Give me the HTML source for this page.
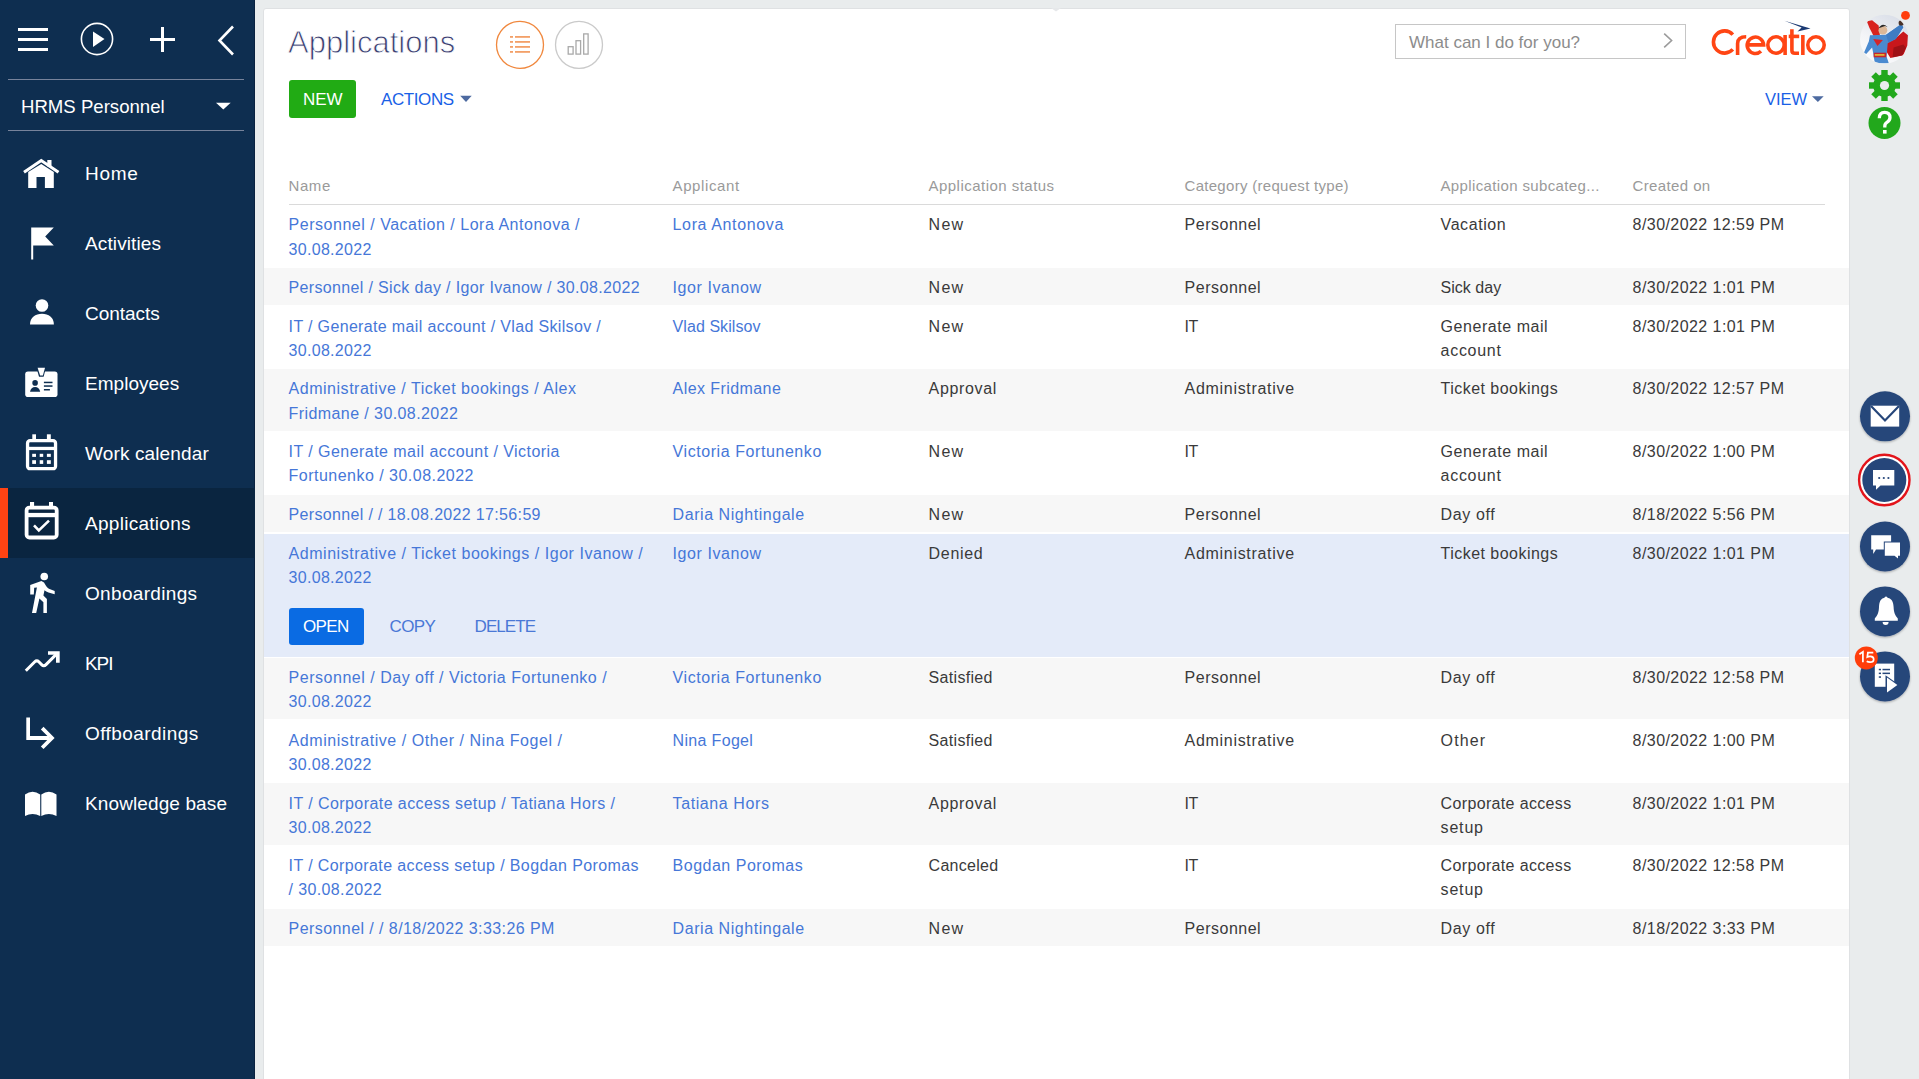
<!DOCTYPE html>
<html><head><meta charset="utf-8">
<style>
*{box-sizing:border-box;margin:0;padding:0}
html,body{width:1919px;height:1079px;overflow:hidden;background:#e9eced;font-family:"Liberation Sans",sans-serif;}
.abs{position:absolute}
#side{position:absolute;left:0;top:0;width:255px;height:1079px;background:#0e2e50;border-right:1px solid #0a2240}
#side .sep{position:absolute;left:8px;width:236px;height:1px;background:#77839b}
.mi{position:absolute;left:0;width:255px;height:70px;color:#fff;font-size:19px;letter-spacing:.15px}
.mi .t{position:absolute;left:85px;top:0.7px;line-height:70px;white-space:nowrap}
.mi svg{position:absolute;left:0;top:0}
#panel{position:absolute;left:263px;top:8px;width:1587px;height:1080px;background:#fff;border:1px solid #dfe1e3;border-radius:3px}
.tx{position:absolute;white-space:nowrap;line-height:1}
.row{position:absolute;left:264px;width:1585px}
.c{position:absolute;font-size:16px;line-height:24.4px;white-space:nowrap;color:#3a3a3a;letter-spacing:.37px}
.lk{color:#4677d8}
.hd{position:absolute;top:177px;font-size:15px;color:#9a9a9a;white-space:nowrap;letter-spacing:.42px}
.rb{position:absolute;left:1860px;width:50px;height:50px;border-radius:50%;background:#27467a;box-shadow:0 1px 2px rgba(0,0,0,.25)}
.rb svg{position:absolute;left:0;top:0}
</style></head>
<body>
<div id="side">
  <!-- top icons -->
  <svg class="abs" style="left:0;top:0" width="255" height="70">
    <rect x="18" y="28" width="30" height="3" fill="#fff"/>
    <rect x="18" y="38" width="30" height="3" fill="#fff"/>
    <rect x="18" y="48" width="30" height="3" fill="#fff"/>
    <circle cx="97" cy="39" r="15.6" fill="none" stroke="#fff" stroke-width="1.6"/>
    <path d="M93 31.5 L104.5 39 L93 47 Z" fill="#fff"/>
    <rect x="150" y="38" width="25" height="3" fill="#fff"/>
    <rect x="161" y="27" width="3" height="25" fill="#fff"/>
    <path d="M233 26.5 L219.5 40.5 L233 54.5" fill="none" stroke="#fff" stroke-width="2.6"/>
  </svg>
  <div class="sep" style="top:79px"></div>
  <div class="abs" style="left:21px;top:91.5px;font-size:18.6px;line-height:30px;color:#fff;white-space:nowrap">HRMS Personnel</div>
  <svg class="abs" style="left:0;top:90px" width="255" height="30"><path d="M216 12.7 L230.7 12.7 L223.3 19.5 Z" fill="#fff"/></svg>
  <div class="sep" style="top:130px"></div>

  <div class="abs" style="left:0;top:488px;width:255px;height:70px;background:#0a2540"></div>
  <div class="abs" style="left:0;top:488px;width:8px;height:70px;background:#ff4313"></div>
  <div class="mi" style="top:138px"><span class="t" style="letter-spacing:0.717px">Home</span></div>
  <div class="mi" style="top:208px"><span class="t" style="letter-spacing:0.117px">Activities</span></div>
  <div class="mi" style="top:278px"><span class="t" style="letter-spacing:-0.050px">Contacts</span></div>
  <div class="mi" style="top:348px"><span class="t" style="letter-spacing:0.025px">Employees</span></div>
  <div class="mi" style="top:418px"><span class="t" style="letter-spacing:0.133px">Work calendar</span></div>
  <div class="mi" style="top:488px"><span class="t" style="letter-spacing:0.277px">Applications</span></div>
  <div class="mi" style="top:558px"><span class="t" style="letter-spacing:0.330px">Onboardings</span></div>
  <div class="mi" style="top:628px"><span class="t" style="letter-spacing:-1.050px">KPI</span></div>
  <div class="mi" style="top:698px"><span class="t" style="letter-spacing:0.441px">Offboardings</span></div>
  <div class="mi" style="top:768px"><span class="t" style="letter-spacing:0.112px">Knowledge base</span></div>
  <svg class="abs" style="left:0;top:0" width="255" height="1079">
    <g fill="#fff">
    <!-- home -->
    <path d="M24 172.3 L41.25 160.5 L58.5 172.3" fill="none" stroke="#fff" stroke-width="3"/>
    <rect x="47.3" y="160" width="4.2" height="6.5"/>
    <path d="M28.2 188.1 V172 L41.25 164.1 L53.8 172 V188.1 H44.9 V177.1 H36.5 V188.1 Z"/>
    <!-- flag -->
    <path d="M31.2 227.6 H53.8 L45.2 236.6 L53.8 245.5 H33.2 V259.5 H31.2 Z"/>
    <!-- contact -->
    <circle cx="42" cy="305.5" r="6.3"/>
    <path d="M30 324.5 C30 317.5 35.5 313.85 42 313.85 C48.5 313.85 53.9 317.5 53.9 324.5 Z"/>
    <!-- employees badge -->
    <rect x="25.2" y="371.5" width="32.3" height="25.5" rx="2.8"/>
    <path d="M36.3 367 L46.2 367 L43.6 376.8 L39 376.8 Z" fill="#0e2e50"/>
    <path d="M37.6 367.7 L45 367.7 L42.9 375.5 L40.1 375.5 Z"/>
    <g fill="#0e2e50">
      <circle cx="35.1" cy="382.9" r="2.8"/>
      <path d="M30 391.8 C30.5 388.5 32.5 387 35.1 387 C37.7 387 39.7 388.5 40.2 391.8 Z"/>
      <rect x="43.9" y="381.7" width="8.6" height="1.5"/>
      <rect x="43.9" y="385.3" width="8.6" height="1.5"/>
      <rect x="43.9" y="389" width="6" height="1.5"/>
    </g>
    <!-- work calendar -->
    <rect x="27.55" y="440.7" width="28" height="28" rx="2.5" fill="none" stroke="#fff" stroke-width="3.3"/>
    <rect x="29" y="446.8" width="25" height="3.3"/>
    <rect x="32.3" y="434.3" width="3.7" height="5"/>
    <rect x="46.9" y="434.3" width="3.9" height="5"/>
    <rect x="32.2" y="453.8" width="3.8" height="3.1"/><rect x="39.7" y="453.8" width="3.5" height="3.1"/><rect x="46.9" y="453.8" width="3.9" height="3.1"/>
    <rect x="32.2" y="460.2" width="3.8" height="3.7"/><rect x="39.7" y="460.2" width="3.5" height="3.7"/><rect x="46.9" y="460.2" width="3.9" height="3.7"/>
    <!-- applications -->
    <rect x="26.6" y="507.6" width="30.1" height="29.9" rx="2.8" fill="none" stroke="#fff" stroke-width="3.8"/>
    <rect x="28" y="512.9" width="27" height="4.3"/>
    <rect x="30" y="502" width="4.1" height="5"/>
    <rect x="49" y="502" width="4" height="5"/>
    <path d="M34 525.4 L38.8 530.4 L49 520.6" fill="none" stroke="#fff" stroke-width="2.6"/>
    <!-- onboarding walker -->
    <circle cx="44.25" cy="576.45" r="3.8"/>
    <path d="M30.2 585.1 L41.4 581.1 L44 582.5 C46 585.5 47 588 48.9 588.7 L54.7 590.9 L54.7 594.3 L48.5 592.5 C46.8 591.8 45.6 591 44.5 590.2 L43.4 595.6 L46.9 598.9 L46.9 612.9 L43.4 612.9 L43.4 602.3 L39.4 598.5 L36.2 612.9 L32 612.9 L36.9 587.4 L34.2 587.8 L33.8 594.5 L30.2 594.5 Z"/>
    <!-- kpi -->
    <path d="M25.8 670.8 L34.8 661.8 Q36.8 659.8 38.8 661.8 L41.6 664.6 Q43.8 666.8 46 664.6 L57.2 653.4" fill="none" stroke="#fff" stroke-width="3"/>
    <path d="M48 651.2 H59.7 V662.7 H56 V654.8 H48 Z"/>
    <!-- offboardings -->
    <path d="M26.3 717.4 H30 V735.9 H49 V740 H26.3 Z"/>
    <path d="M42.2 728.1 L52 737.9 L42.2 747.8" fill="none" stroke="#fff" stroke-width="3.7"/>
    <!-- book -->
    <path d="M25 794.4 Q32.6 789.3 40.2 794.4 V816 Q32.6 811.8 25 816 Z"/>
    <path d="M41.3 794.4 Q48.9 789.3 56.5 794.4 V816 Q48.9 811.8 41.3 816 Z"/>
    </g>
  </svg>
</div>

<div id="panel"></div>
<div class="tx" id="title" style="left:288px;top:26.8px;font-size:31px;color:#3b3f72;-webkit-text-stroke:0.85px #fff">Applications</div>
<div class="abs" style="left:289px;top:204px;width:1536px;height:1px;background:#dadada"></div>
<div class="hd" style="left:288.5px;letter-spacing:0.595px">Name</div>
<div class="hd" style="left:672.5px;letter-spacing:0.623px">Applicant</div>
<div class="hd" style="left:928.5px;letter-spacing:0.472px">Application status</div>
<div class="hd" style="left:1184.5px;letter-spacing:0.296px">Category (request type)</div>
<div class="hd" style="left:1440.5px;letter-spacing:0.362px">Application subcateg...</div>
<div class="hd" style="left:1632.5px;letter-spacing:0.387px">Created on</div>
<div class="c lk" style="left:288.6px;top:213.1px"><span style="display:block;letter-spacing:0.516px">Personnel / Vacation / Lora Antonova /</span><span style="display:block;letter-spacing:0.294px">30.08.2022</span></div>
<div class="c lk" style="left:672.6px;top:213.1px"><span style="display:block;letter-spacing:0.624px">Lora Antonova</span></div>
<div class="c" style="left:928.6px;top:213.1px"><span style="display:block;letter-spacing:1.252px">New</span></div>
<div class="c" style="left:1184.6px;top:213.1px"><span style="display:block;letter-spacing:0.503px">Personnel</span></div>
<div class="c" style="left:1440.6px;top:213.1px"><span style="display:block;letter-spacing:0.569px">Vacation</span></div>
<div class="c" style="left:1632.6px;top:213.1px"><span style="display:block;letter-spacing:0.431px">8/30/2022 12:59 PM</span></div>
<div class="row" style="top:268px;height:37px;background:#f7f7f7"></div>
<div class="c lk" style="left:288.6px;top:275.8px"><span style="display:block;letter-spacing:0.344px">Personnel / Sick day / Igor Ivanow / 30.08.2022</span></div>
<div class="c lk" style="left:672.6px;top:275.8px"><span style="display:block;letter-spacing:0.571px">Igor Ivanow</span></div>
<div class="c" style="left:928.6px;top:275.8px"><span style="display:block;letter-spacing:1.252px">New</span></div>
<div class="c" style="left:1184.6px;top:275.8px"><span style="display:block;letter-spacing:0.503px">Personnel</span></div>
<div class="c" style="left:1440.6px;top:275.8px"><span style="display:block;letter-spacing:0.012px">Sick day</span></div>
<div class="c" style="left:1632.6px;top:275.8px"><span style="display:block;letter-spacing:0.435px">8/30/2022 1:01 PM</span></div>
<div class="c lk" style="left:288.6px;top:314.5px"><span style="display:block;letter-spacing:0.347px">IT / Generate mail account / Vlad Skilsov /</span><span style="display:block;letter-spacing:0.294px">30.08.2022</span></div>
<div class="c lk" style="left:672.6px;top:314.5px"><span style="display:block;letter-spacing:0.064px">Vlad Skilsov</span></div>
<div class="c" style="left:928.6px;top:314.5px"><span style="display:block;letter-spacing:1.252px">New</span></div>
<div class="c" style="left:1184.6px;top:314.5px"><span style="display:block;letter-spacing:-0.597px">IT</span></div>
<div class="c" style="left:1440.6px;top:314.5px"><span style="display:block;letter-spacing:0.546px">Generate mail</span><span style="display:block;letter-spacing:0.706px">account</span></div>
<div class="c" style="left:1632.6px;top:314.5px"><span style="display:block;letter-spacing:0.435px">8/30/2022 1:01 PM</span></div>
<div class="row" style="top:369px;height:62px;background:#f7f7f7"></div>
<div class="c lk" style="left:288.6px;top:377.4px"><span style="display:block;letter-spacing:0.519px">Administrative / Ticket bookings / Alex</span><span style="display:block;letter-spacing:0.415px">Fridmane / 30.08.2022</span></div>
<div class="c lk" style="left:672.6px;top:377.4px"><span style="display:block;letter-spacing:0.425px">Alex Fridmane</span></div>
<div class="c" style="left:928.6px;top:377.4px"><span style="display:block;letter-spacing:0.653px">Approval</span></div>
<div class="c" style="left:1184.6px;top:377.4px"><span style="display:block;letter-spacing:0.692px">Administrative</span></div>
<div class="c" style="left:1440.6px;top:377.4px"><span style="display:block;letter-spacing:0.464px">Ticket bookings</span></div>
<div class="c" style="left:1632.6px;top:377.4px"><span style="display:block;letter-spacing:0.431px">8/30/2022 12:57 PM</span></div>
<div class="c lk" style="left:288.6px;top:439.6px"><span style="display:block;letter-spacing:0.452px">IT / Generate mail account / Victoria</span><span style="display:block;letter-spacing:0.478px">Fortunenko / 30.08.2022</span></div>
<div class="c lk" style="left:672.6px;top:439.6px"><span style="display:block;letter-spacing:0.57px">Victoria Fortunenko</span></div>
<div class="c" style="left:928.6px;top:439.6px"><span style="display:block;letter-spacing:1.252px">New</span></div>
<div class="c" style="left:1184.6px;top:439.6px"><span style="display:block;letter-spacing:-0.597px">IT</span></div>
<div class="c" style="left:1440.6px;top:439.6px"><span style="display:block;letter-spacing:0.546px">Generate mail</span><span style="display:block;letter-spacing:0.706px">account</span></div>
<div class="c" style="left:1632.6px;top:439.6px"><span style="display:block;letter-spacing:0.435px">8/30/2022 1:00 PM</span></div>
<div class="row" style="top:495px;height:37px;background:#f7f7f7"></div>
<div class="c lk" style="left:288.6px;top:502.8px"><span style="display:block;letter-spacing:0.339px">Personnel / / 18.08.2022 17:56:59</span></div>
<div class="c lk" style="left:672.6px;top:502.8px"><span style="display:block;letter-spacing:0.55px">Daria Nightingale</span></div>
<div class="c" style="left:928.6px;top:502.8px"><span style="display:block;letter-spacing:1.252px">New</span></div>
<div class="c" style="left:1184.6px;top:502.8px"><span style="display:block;letter-spacing:0.503px">Personnel</span></div>
<div class="c" style="left:1440.6px;top:502.8px"><span style="display:block;letter-spacing:0.622px">Day off</span></div>
<div class="c" style="left:1632.6px;top:502.8px"><span style="display:block;letter-spacing:0.435px">8/18/2022 5:56 PM</span></div>
<div class="row" style="top:534px;height:123px;background:#e4ebf9"></div>
<div class="c lk" style="left:288.6px;top:541.5px"><span style="display:block;letter-spacing:0.535px">Administrative / Ticket bookings / Igor Ivanow /</span><span style="display:block;letter-spacing:0.294px">30.08.2022</span></div>
<div class="c lk" style="left:672.6px;top:541.5px"><span style="display:block;letter-spacing:0.571px">Igor Ivanow</span></div>
<div class="c" style="left:928.6px;top:541.5px"><span style="display:block;letter-spacing:0.693px">Denied</span></div>
<div class="c" style="left:1184.6px;top:541.5px"><span style="display:block;letter-spacing:0.692px">Administrative</span></div>
<div class="c" style="left:1440.6px;top:541.5px"><span style="display:block;letter-spacing:0.464px">Ticket bookings</span></div>
<div class="c" style="left:1632.6px;top:541.5px"><span style="display:block;letter-spacing:0.435px">8/30/2022 1:01 PM</span></div>
<div class="row" style="top:658px;height:61px;background:#f7f7f7"></div>
<div class="c lk" style="left:288.6px;top:665.8px"><span style="display:block;letter-spacing:0.515px">Personnel / Day off / Victoria Fortunenko /</span><span style="display:block;letter-spacing:0.294px">30.08.2022</span></div>
<div class="c lk" style="left:672.6px;top:665.8px"><span style="display:block;letter-spacing:0.57px">Victoria Fortunenko</span></div>
<div class="c" style="left:928.6px;top:665.8px"><span style="display:block;letter-spacing:0.314px">Satisfied</span></div>
<div class="c" style="left:1184.6px;top:665.8px"><span style="display:block;letter-spacing:0.503px">Personnel</span></div>
<div class="c" style="left:1440.6px;top:665.8px"><span style="display:block;letter-spacing:0.622px">Day off</span></div>
<div class="c" style="left:1632.6px;top:665.8px"><span style="display:block;letter-spacing:0.431px">8/30/2022 12:58 PM</span></div>
<div class="c lk" style="left:288.6px;top:728.7px"><span style="display:block;letter-spacing:0.554px">Administrative / Other / Nina Fogel /</span><span style="display:block;letter-spacing:0.294px">30.08.2022</span></div>
<div class="c lk" style="left:672.6px;top:728.7px"><span style="display:block;letter-spacing:0.325px">Nina Fogel</span></div>
<div class="c" style="left:928.6px;top:728.7px"><span style="display:block;letter-spacing:0.314px">Satisfied</span></div>
<div class="c" style="left:1184.6px;top:728.7px"><span style="display:block;letter-spacing:0.692px">Administrative</span></div>
<div class="c" style="left:1440.6px;top:728.7px"><span style="display:block;letter-spacing:1.108px">Other</span></div>
<div class="c" style="left:1632.6px;top:728.7px"><span style="display:block;letter-spacing:0.435px">8/30/2022 1:00 PM</span></div>
<div class="row" style="top:783px;height:62px;background:#f7f7f7"></div>
<div class="c lk" style="left:288.6px;top:791.8px"><span style="display:block;letter-spacing:0.426px">IT / Corporate access setup / Tatiana Hors /</span><span style="display:block;letter-spacing:0.294px">30.08.2022</span></div>
<div class="c lk" style="left:672.6px;top:791.8px"><span style="display:block;letter-spacing:0.589px">Tatiana Hors</span></div>
<div class="c" style="left:928.6px;top:791.8px"><span style="display:block;letter-spacing:0.653px">Approval</span></div>
<div class="c" style="left:1184.6px;top:791.8px"><span style="display:block;letter-spacing:-0.597px">IT</span></div>
<div class="c" style="left:1440.6px;top:791.8px"><span style="display:block;letter-spacing:0.347px">Corporate access</span><span style="display:block;letter-spacing:0.816px">setup</span></div>
<div class="c" style="left:1632.6px;top:791.8px"><span style="display:block;letter-spacing:0.435px">8/30/2022 1:01 PM</span></div>
<div class="c lk" style="left:288.6px;top:853.8px"><span style="display:block;letter-spacing:0.388px">IT / Corporate access setup / Bogdan Poromas</span><span style="display:block;letter-spacing:0.364px">/ 30.08.2022</span></div>
<div class="c lk" style="left:672.6px;top:853.8px"><span style="display:block;letter-spacing:0.5px">Bogdan Poromas</span></div>
<div class="c" style="left:928.6px;top:853.8px"><span style="display:block;letter-spacing:0.27px">Canceled</span></div>
<div class="c" style="left:1184.6px;top:853.8px"><span style="display:block;letter-spacing:-0.597px">IT</span></div>
<div class="c" style="left:1440.6px;top:853.8px"><span style="display:block;letter-spacing:0.347px">Corporate access</span><span style="display:block;letter-spacing:0.816px">setup</span></div>
<div class="c" style="left:1632.6px;top:853.8px"><span style="display:block;letter-spacing:0.431px">8/30/2022 12:58 PM</span></div>
<div class="row" style="top:909px;height:37px;background:#f7f7f7"></div>
<div class="c lk" style="left:288.6px;top:916.8px"><span style="display:block;letter-spacing:0.426px">Personnel / / 8/18/2022 3:33:26 PM</span></div>
<div class="c lk" style="left:672.6px;top:916.8px"><span style="display:block;letter-spacing:0.55px">Daria Nightingale</span></div>
<div class="c" style="left:928.6px;top:916.8px"><span style="display:block;letter-spacing:1.252px">New</span></div>
<div class="c" style="left:1184.6px;top:916.8px"><span style="display:block;letter-spacing:0.503px">Personnel</span></div>
<div class="c" style="left:1440.6px;top:916.8px"><span style="display:block;letter-spacing:0.622px">Day off</span></div>
<div class="c" style="left:1632.6px;top:916.8px"><span style="display:block;letter-spacing:0.435px">8/18/2022 3:33 PM</span></div>
<div class="abs" style="left:289px;top:608px;width:75px;height:37px;background:#0a6be3;border-radius:3px"></div>
<div class="tx" style="left:303px;top:617.8px;font-size:17px;color:#fff;letter-spacing:-0.6px">OPEN</div>
<div class="tx" style="left:389.5px;top:617.8px;font-size:17px;color:#4a78d6;letter-spacing:-0.6px">COPY</div>
<div class="tx" style="left:474.5px;top:617.8px;font-size:17px;color:#4a78d6;letter-spacing:-0.9px">DELETE</div>
<svg class="abs" style="left:0;top:0" width="1919" height="130">
  <circle cx="520" cy="44.8" r="23.5" fill="none" stroke="#f0883e" stroke-width="1.3"/>
  <g fill="#f3a068">
    <rect x="510" y="36" width="3" height="1.8"/><rect x="515" y="36" width="15" height="1.8"/>
    <rect x="510" y="41" width="3" height="1.8"/><rect x="515" y="41" width="15" height="1.8"/>
    <rect x="510" y="46" width="3" height="1.8"/><rect x="515" y="46" width="15" height="1.8"/>
    <rect x="510" y="51" width="3" height="1.8"/><rect x="515" y="51" width="15" height="1.8"/>
  </g>
  <circle cx="579" cy="44.8" r="23.5" fill="none" stroke="#cacaca" stroke-width="1.3"/>
  <g fill="none" stroke="#a9a9a9" stroke-width="1.3">
    <rect x="568.2" y="46.7" width="4.9" height="7.4"/>
    <rect x="576" y="40.7" width="4.6" height="13.4"/>
    <rect x="583.7" y="33.9" width="4.4" height="20.2"/>
  </g>
  <rect x="289" y="80" width="67" height="38" rx="3" fill="#21ab14"/>
  <path d="M460.2 95.8 H471.7 L466 102 Z" fill="#4d6aa0"/>
  <path d="M1812 96.2 H1823.7 L1817.9 101.9 Z" fill="#4d6aa0"/>
  <path d="M1051 8 H1061 L1056 11.5 Z" fill="#e6e8ea"/>
  <rect x="1395.5" y="24.5" width="290" height="34" fill="#fff" stroke="#c6c6c6" stroke-width="1"/>
  <path d="M1664.2 33.6 L1671.6 40.5 L1664.2 47.4" fill="none" stroke="#9b9b9b" stroke-width="1.6"/>
</svg>
<div class="tx" style="left:303px;top:90.6px;font-size:17px;color:#fff">NEW</div>
<div class="tx" style="left:381px;top:90.6px;font-size:17px;color:#1a5fe6;letter-spacing:-0.4px">ACTIONS</div>
<div class="tx" style="left:1765px;top:90.5px;font-size:16.5px;color:#1a5fe6">VIEW</div>
<div class="tx" style="left:1409px;top:33.6px;font-size:17px;color:#8c8c8c">What can I do for you?</div>

<svg class="abs" style="left:0;top:0" width="1919" height="720">
  <defs><clipPath id="avc"><circle cx="1884.5" cy="39.2" r="24.5"/></clipPath><linearGradient id="avg" x1="0.8" y1="0" x2="0.2" y2="1"><stop offset="0" stop-color="#d3d9e4"/><stop offset="0.6" stop-color="#f3f4f7"/><stop offset="1" stop-color="#ffffff"/></linearGradient></defs>
  <g clip-path="url(#avc)">
    <rect x="1856" y="10" width="60" height="60" fill="url(#avg)"/>
    <polygon points="1866.8,21.3 1872.1,20.2 1878.6,25.6 1879.9,35.3 1873.7,36.3 1869.4,27.7" fill="#d8231f"/>
    <polygon points="1886.1,42.3 1894.7,39.0 1903.3,31.5 1907.9,35.3 1907.3,45.5 1903.3,55.2 1890.4,58.1 1886.1,50.9" fill="#c9171c"/>
    <polygon points="1893.6,47.6 1903.3,44.4 1906.0,47.6 1902.2,55.2 1892.6,57.3" fill="#9e1116"/>
    <polygon points="1870.0,35.3 1886.1,34.7 1898.5,26.1 1901.2,24.0 1903.3,27.2 1895.8,39.0 1887.7,43.3 1886.6,56.8 1888.8,63.2 1874.8,63.2 1873.2,53.0 1872.1,47.6 1866.2,54.1 1864.1,52.5 1868.9,41.2" fill="#4a8ad0"/>
    <polygon points="1886.1,34.7 1898.5,26.1 1901.2,24.0 1903.3,27.2 1895.8,39.0 1888.3,42.3" fill="#3f7cc4"/>
    <circle cx="1901.2" cy="22.9" r="2.6" fill="#4a3228"/>
    <circle cx="1882.9" cy="30.2" r="4.4" fill="#dcb898"/>
    <path d="M1878.6 28.3 Q1882.3 21.8 1887.7 27.2 L1885.0 26.1 Z" fill="#2a2a2a"/>
    <polygon points="1873.2,39.0 1882.9,40.1 1877.5,46.0" fill="#d4262a"/>
    <rect x="1873.7" y="52.7" width="12.6" height="4.6" fill="#c9252a"/>
    <rect x="1874.8" y="54.1" width="9.7" height="1.6" fill="#e2c23a"/>
  </g>
  <circle cx="1905.5" cy="15.4" r="4.4" fill="#ff3d0c"/>
  <!-- gear -->
  <g transform="translate(1884.5 85.5)" fill="#22a81c">
    <circle r="11.3"/>
    <g id="tooth"><rect x="-3.2" y="-15.5" width="6.4" height="6"/></g>
    <use href="#tooth" transform="rotate(45)"/><use href="#tooth" transform="rotate(90)"/><use href="#tooth" transform="rotate(135)"/>
    <use href="#tooth" transform="rotate(180)"/><use href="#tooth" transform="rotate(225)"/><use href="#tooth" transform="rotate(270)"/><use href="#tooth" transform="rotate(315)"/>
    <circle r="4.6" fill="#e9eced"/>
  </g>
  <circle cx="1884.5" cy="123" r="16" fill="#22a81c"/>
  <path d="M1879.3 118.2 Q1879.3 112.3 1884.6 112.3 Q1890 112.3 1890 117.6 Q1890 120.6 1886.9 122.4 Q1884.8 123.6 1884.8 126.2 V127.5" fill="none" stroke="#fff" stroke-width="3.3"/>
  <rect x="1883" y="130" width="3.6" height="3.6" fill="#fff"/>
  <!-- logo -->
  <g fill="none" stroke="#ff4514" stroke-width="3.6">
    <path d="M1732.8 34.6 A11.1 11.1 0 1 0 1732.8 49.4"/>
    <path d="M1737.6 55 V43.5 Q1737.6 36.7 1746.2 36.7"/>
    <path d="M1747.2 44.85 H1763.6 A8.2 8.2 0 1 0 1761 51.3"/>
    <circle cx="1776" cy="45" r="8.2"/>
    <path d="M1785.1 35 V55"/>
    <path d="M1791.9 29.3 V50.5 Q1791.9 53.2 1795 53.2 H1799"/>
    <path d="M1788.7 36.4 H1799.2"/>
    <path d="M1802.85 35 V55"/>
    <circle cx="1816" cy="45" r="8.2"/>
  </g>
  <path d="M1784.4 20.7 L1810.5 28.5 L1797.5 31.6 L1801.6 27.6 Z" fill="#1b3a73"/>
</svg>

<svg class="abs" style="left:1845px;top:380px" width="74" height="340">
  <defs><filter id="sh" x="-20%" y="-20%" width="140%" height="150%"><feDropShadow dx="0" dy="1" stdDeviation="0.8" flood-opacity="0.3"/></filter></defs>
  <g transform="translate(-1845 -380)">
  <circle cx="1885" cy="416.3" r="25" fill="#26467a" filter="url(#sh)"/>
  <path d="M1870.7 405.7 H1899.2 V426.6 H1870.7 Z" fill="#fff"/>
  <path d="M1871 406 L1885 420.5 L1899 406" fill="none" stroke="#26467a" stroke-width="2.2"/>
  <circle cx="1884.3" cy="480" r="25.2" fill="#fff" stroke="#e3141b" stroke-width="2.4"/>
  <circle cx="1884.3" cy="480" r="22" fill="#26467a"/>
  <path d="M1873 470 H1894.3 V485.6 H1880.5 L1876 489.8 V485.6 H1873 Z" fill="#fff"/>
  <circle cx="1879.2" cy="478" r="1.1" fill="#26467a"/><circle cx="1883.8" cy="478" r="1.1" fill="#26467a"/><circle cx="1888.4" cy="478" r="1.1" fill="#26467a"/>
  <circle cx="1885" cy="546.5" r="25" fill="#26467a" filter="url(#sh)"/>
  <path d="M1871.2 535.3 H1891.1 V549.4 H1876 L1873.2 553.9 V549.4 H1871.2 Z" fill="#fff"/>
  <path d="M1883.8 541.5 H1901 V556.7 H1898.8 V559.4 L1895 556.7 H1883.8 Z" fill="#26467a"/>
  <path d="M1884.8 542.5 H1900 V555.7 H1898 V558.4 L1894.5 555.7 H1884.8 Z" fill="#fff"/>
  <circle cx="1885" cy="611.4" r="25" fill="#26467a" filter="url(#sh)"/>
  <path d="M1885.5 597.8 C1880.5 598 1879.2 602 1879 607 C1878.8 612.5 1877.5 615.5 1874.8 618.4 V620.8 H1897.8 V618.4 C1895.2 615.5 1893.8 612.5 1893.6 607 C1893.4 602 1891.8 598 1886.5 597.8 Z" fill="#fff"/>
  <path d="M1882.6 622 A3 3 0 0 0 1888.6 622 Z" fill="#fff"/><circle cx="1886" cy="598" r="1.6" fill="#fff"/>
  <circle cx="1885" cy="676.4" r="25" fill="#26467a" filter="url(#sh)"/>
  <path d="M1874.8 663.6 H1894.2 V686.8 H1874.8 Z" fill="#fff"/>
  <g fill="#26467a"><rect x="1878.8" y="668.8" width="2.2" height="1.5"/><rect x="1882.5" y="668.8" width="7.5" height="1.5"/>
  <rect x="1878.8" y="672.6" width="2.2" height="1.5"/><rect x="1882.5" y="672.6" width="7.5" height="1.5"/>
  <rect x="1878.8" y="676.3" width="2.2" height="1.5"/></g>
  <path d="M1885.5 675.3 L1899.4 685 L1885.5 694.6 Z" fill="#26467a"/>
  <path d="M1887 677.6 L1897.4 685 L1887 692.4 Z" fill="#fff"/>
  <circle cx="1866.3" cy="657.9" r="11.5" fill="#ff3d0a"/>
  </g>
</svg>
<svg class="abs" style="left:0;top:0" width="1919" height="720"><g fill="none" stroke="#fff" stroke-width="1.7"><path d="M1859.4 654.2 L1862.9 651.9 V662.2"/><path d="M1873.3 652.6 H1867.9 L1867.3 657 Q1868.8 656.2 1870.3 656.3 Q1873.7 656.6 1873.7 659.2 Q1873.7 662.2 1870.1 662.2 Q1868 662.2 1866.7 661.3"/></g></svg>
</body></html>
